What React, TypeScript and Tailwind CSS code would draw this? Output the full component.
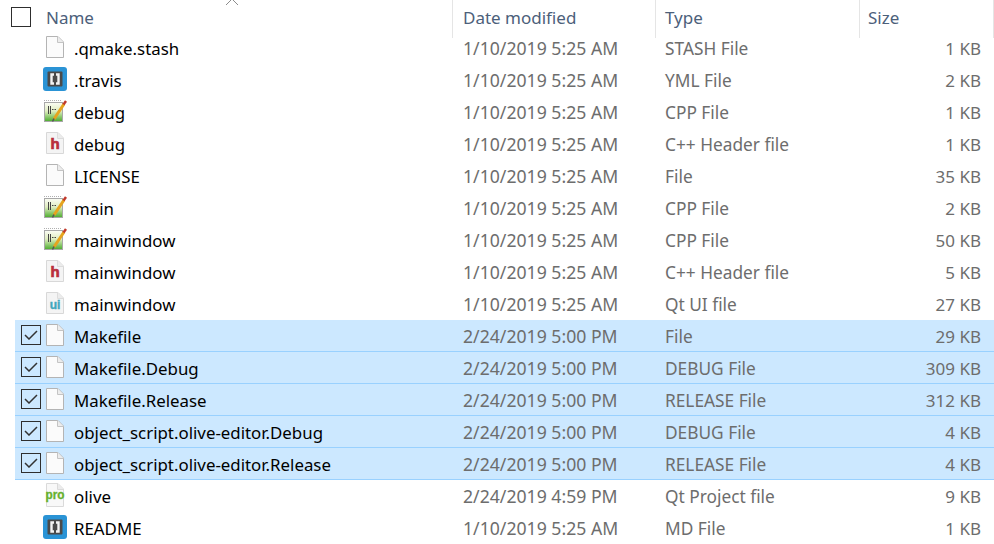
const font = "font-['Noto_Sans','Open_Sans',sans-serif]";

type IconKind = "file" | "brackets" | "cpp" | "h" | "ui" | "pro";

interface FileRow {
  name: string;
  date: string;
  type: string;
  size: string;
  icon: IconKind;
  selected?: boolean;
}

const OLD = "1/10/2019 5:25 AM";
const NEW = "2/24/2019 5:00 PM";

const rows: FileRow[] = [
  { name: ".qmake.stash", date: OLD, type: "STASH File", size: "1 KB", icon: "file" },
  { name: ".travis", date: OLD, type: "YML File", size: "2 KB", icon: "brackets" },
  { name: "debug", date: OLD, type: "CPP File", size: "1 KB", icon: "cpp" },
  { name: "debug", date: OLD, type: "C++ Header file", size: "1 KB", icon: "h" },
  { name: "LICENSE", date: OLD, type: "File", size: "35 KB", icon: "file" },
  { name: "main", date: OLD, type: "CPP File", size: "2 KB", icon: "cpp" },
  { name: "mainwindow", date: OLD, type: "CPP File", size: "50 KB", icon: "cpp" },
  { name: "mainwindow", date: OLD, type: "C++ Header file", size: "5 KB", icon: "h" },
  { name: "mainwindow", date: OLD, type: "Qt UI file", size: "27 KB", icon: "ui" },
  { name: "Makefile", date: NEW, type: "File", size: "29 KB", icon: "file", selected: true },
  { name: "Makefile.Debug", date: NEW, type: "DEBUG File", size: "309 KB", icon: "file", selected: true },
  { name: "Makefile.Release", date: NEW, type: "RELEASE File", size: "312 KB", icon: "file", selected: true },
  { name: "object_script.olive-editor.Debug", date: NEW, type: "DEBUG File", size: "4 KB", icon: "file", selected: true },
  { name: "object_script.olive-editor.Release", date: NEW, type: "RELEASE File", size: "4 KB", icon: "file", selected: true },
  { name: "olive", date: "2/24/2019 4:59 PM", type: "Qt Project file", size: "9 KB", icon: "pro" },
  { name: "README", date: OLD, type: "MD File", size: "1 KB", icon: "brackets" },
];

const Page = ({ children, soft }: { children?: React.ReactNode; soft?: boolean }) => (
  <svg width="18" height="22" viewBox="0 0 18 22" className="block">
    <path d="M0.5 0.5H12L17.5 6V21.5H0.5Z" fill={soft ? "#f4f4f4" : "#fbfbfb"} stroke={soft ? "#d8d8d8" : "#b4b4b4"} />
    <path d="M11.5 0.5V6.5H17.5" fill="#ececec" stroke={soft ? "#dcdcdc" : "#c4c4c4"} />
    {children}
  </svg>
);

const FileIcon = ({ kind }: { kind: IconKind }) => {
  if (kind === "file") return <Page />;
  if (kind === "h")
    return (
      <Page soft>
        <text x="9" y="17" textAnchor="middle" fontFamily="Liberation Sans" fontWeight="700" fontSize="15" fill="#b92f3c" stroke="#b92f3c" strokeWidth="0.7">
          h
        </text>
      </Page>
    );
  if (kind === "ui")
    return (
      <Page soft>
        <text x="9" y="16.5" textAnchor="middle" fontFamily="Liberation Sans" fontWeight="700" fontSize="12" fill="#43a7bd" stroke="#43a7bd" strokeWidth="0.4">
          ui
        </text>
      </Page>
    );
  if (kind === "pro")
    return (
      <svg width="20" height="24" viewBox="0 0 20 24" className="block">
        <path d="M1.5 0.5H13L18.5 6V23.5H1.5Z" fill="#f8f8f8" stroke="#dadada" />
        <path d="M12.5 0.5V6.5H18.5" fill="#ececec" stroke="#dadada" />
        <text x="0.5" y="15.5" textLength="19" lengthAdjust="spacingAndGlyphs" fontFamily="Liberation Sans" fontWeight="700" fontSize="12" fill="#66b12c" stroke="#66b12c" strokeWidth="0.3">
          pro
        </text>
      </svg>
    );
  if (kind === "brackets")
    return (
      <svg width="24" height="24" viewBox="0 0 24 24" className="block">
        <rect width="24" height="24" rx="3" fill="#2a93d5" />
        <rect x="4.5" y="4.5" width="15" height="15" rx="1" fill="#4a4a4a" />
        <path d="M11 7.5H8.5V16.5H11M13 7.5H15.5V16.5H13" fill="none" stroke="#f4f4f4" strokeWidth="2.4" />
      </svg>
    );
  return (
    <svg width="24" height="24" viewBox="0 0 24 24" className="block">
      <defs>
        <linearGradient id="cppFill" x1="0" y1="0" x2="0" y2="1">
          <stop offset="0" stopColor="#fbfcf6" />
          <stop offset="0.45" stopColor="#e0edc0" />
          <stop offset="1" stopColor="#4aab2c" />
        </linearGradient>
      </defs>
      <rect x="1.5" y="3.5" width="18" height="19" fill="url(#cppFill)" stroke="#a8a8a8" />
      <path d="M1 1.5H19" stroke="#b0b0b0" strokeDasharray="1 1" />
      <path d="M5.5 7V15M7.5 7V15" stroke="#444444" />
      <path d="M9 10.5H13" stroke="#444444" strokeDasharray="1.5 1" />
      <path d="M11 20L21 5" stroke="#e6a41f" strokeWidth="3" />
      <path d="M20.5 5.5L23 2" stroke="#c0392b" strokeWidth="2.5" />
      <path d="M9.5 22.5L11 19.5" stroke="#555555" strokeWidth="1.5" />
    </svg>
  );
};

const Check = ({ checked }: { checked?: boolean }) => (
  <span className="flex h-5 w-5 shrink-0 items-center justify-center border border-[#2e2e2e]">
    {checked && (
      <svg width="14" height="10" viewBox="0 0 14 10">
        <path d="M1 5L5 9L13 1" fill="none" stroke="#333333" strokeWidth="1.5" />
      </svg>
    )}
  </span>
);

const Row = ({ row }: { row: FileRow }) => (
  <div
    className={`ml-[15px] flex h-8 items-center border-b ${
      row.selected ? "border-[#99d1ff] bg-[#cce8ff]" : "border-transparent"
    }`}
  >
    <div className="flex w-[437px] items-center pl-[6px]">
      <span className="w-5 shrink-0">{row.selected && <Check checked />}</span>
      <span className="flex w-[28px] shrink-0 justify-center">
        <FileIcon kind={row.icon} />
      </span>
      <span className="ml-[5px] whitespace-nowrap pt-[2px] text-[16.85px] text-[#000000]">{row.name}</span>
    </div>
    <div className="w-[203px] whitespace-nowrap pl-[11px] pt-[2px] text-[17.65px] text-[#6d6d6d]">{row.date}</div>
    <div className="w-[204px] whitespace-nowrap pl-[10px] pt-[2px] text-[17.3px] text-[#6d6d6d]">{row.type}</div>
    <div className="flex-1 whitespace-nowrap pr-[13px] pt-[2px] text-right text-[#6d6d6d]">{row.size}</div>
  </div>
);

export default function App() {
  return (
    <div className={`relative h-[544px] w-[994px] overflow-hidden bg-white text-[17px] ${font}`}>
      <svg width="14" height="5" viewBox="0 0 14 5" className="absolute left-[225px] top-0">
        <path d="M1 5L7 -1L13 5" fill="none" stroke="#8c8c8c" />
      </svg>
      <div className="flex h-8 text-[#4c607a]">
        <div className="flex w-[452px] pl-[11px] pt-[7px]">
          <Check />
          <span className="ml-[15px] leading-[22px]">Name</span>
        </div>
        <div className="h-[38px] w-[203px] border-l border-[#e5e5e5] pl-[10px] pt-[6px] leading-6">Date modified</div>
        <div className="h-[38px] w-[204px] border-l border-[#e5e5e5] pl-[9px] pt-[6px] leading-6">Type</div>
        <div className="h-[38px] flex-1 border-x border-[#e5e5e5] pl-[8px] pt-[6px] leading-6">Size</div>
      </div>
      {rows.map((row, i) => (
        <Row key={i} row={row} />
      ))}
    </div>
  );
}
